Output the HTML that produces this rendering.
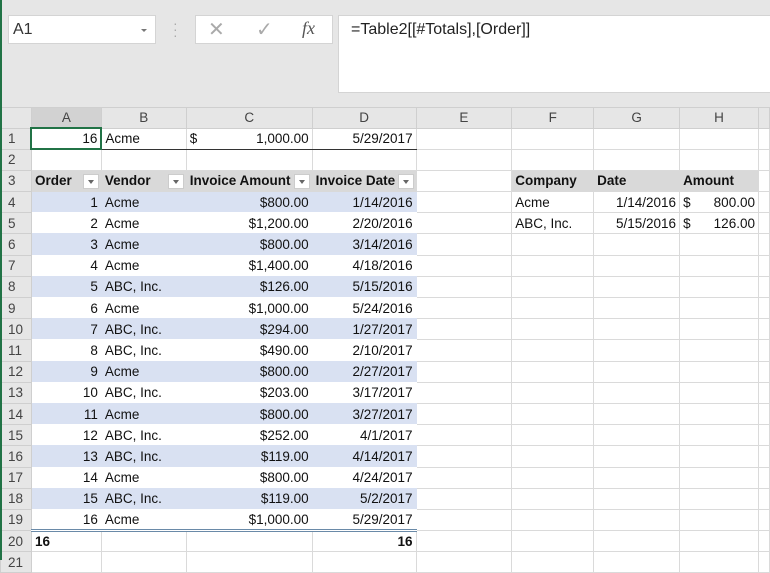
<!DOCTYPE html>
<html><head><style>
*{margin:0;padding:0;box-sizing:border-box}
body{width:770px;height:560px;overflow:hidden;background:#fff;font-family:"Liberation Sans",sans-serif;position:relative}
.top{position:absolute;left:0;top:0;width:770px;height:107px;background:#e6e6e6}
.gl{position:absolute;left:0;top:0;width:2px;height:560px;background:#217346;z-index:5}
.nb{position:absolute;left:8px;top:15px;width:148px;height:29px;background:#fff;border:1px solid #d4d4d4;font-size:16px;padding:5px 4px;color:#333}
.nb:after{content:"";position:absolute;right:8px;top:13px;border:3px solid transparent;border-top:3px solid #777}
.dots{position:absolute;left:173px;top:20px;color:#aaa;font-size:14px;line-height:6px}
.fx{position:absolute;left:195px;top:15px;width:138px;height:29px;background:#fff;border:1px solid #d4d4d4;color:#aaa;font-size:20px}
.fb{position:absolute;left:338px;top:15px;width:440px;height:78px;background:#fff;border:1px solid #d4d4d4;font-size:16px;padding:5px 12px;color:#222}
table{position:absolute;left:0;top:107px;border-collapse:collapse;table-layout:fixed;font-size:13.5px;color:#111}
td{border:1px solid #dadada;height:21.2px;padding:0 3px;white-space:nowrap;overflow:hidden;line-height:19px}
tr.h td{background:#e6e6e6;text-align:center;color:#444;height:20px;border-color:#cfcfcf}
td.r{background:#e6e6e6;color:#444;text-align:left;padding-left:7px;border-color:#cfcfcf}
.R{text-align:right}
.th{background:#d9d9d9;font-weight:bold;position:relative;border-color:#d9d9d9}
.th i{position:absolute;right:2px;top:3px;width:16px;height:15px;background:#fff;border:1px solid #ccc}
.th i:after{content:"";position:absolute;left:4px;top:5px;border:3px solid transparent;border-top:4px solid #666}
tr.b td.c{background:#d9e1f2;border-color:#fff #d9e1f2}
tr.w td.c{border-color:#d9e1f2 #fff}
.g{background:#d9d9d9;font-weight:bold;border-color:#d9d9d9}
</style></head><body>
<div class="gl"></div>
<div class="top">
<div class="nb">A1</div>
<div class="dots">·<br>·<br>·</div>
<div class="fx"><span style="position:absolute;left:12px;top:1px">✕</span><span style="position:absolute;left:60px;top:1px">✓</span><span style="position:absolute;left:106px;top:2px;font-family:'Liberation Serif',serif;font-style:italic;color:#555;font-size:18px">fx</span></div>
<div class="fb">=Table2[[#Totals],[Order]]</div>
</div>
<table>
<colgroup><col style="width:31px"><col style="width:70px"><col style="width:85px"><col style="width:126px"><col style="width:104px"><col style="width:96px"><col style="width:82px"><col style="width:86px"><col style="width:79px"><col style="width:11px"></colgroup>
<tr class="h"><td style="background:#e6e6e6"></td><td style="background:#d2d2d2">A</td><td>B</td><td>C</td><td>D</td><td>E</td><td>F</td><td>G</td><td>H</td><td></td></tr>
<tr><td class="r">1</td><td class="R" style="border:2px solid #217346">16</td><td style="border-bottom:1px solid #333">Acme</td><td style="border-bottom:1px solid #333">$<span style="float:right">1,000.00</span></td><td class="R" style="border-bottom:1px solid #333">5/29/2017</td><td></td><td></td><td></td><td></td><td></td></tr>
<tr><td class="r">2</td><td></td><td></td><td></td><td></td><td></td><td></td><td></td><td></td><td></td></tr>
<tr><td class="r">3</td><td class="th">Order<i></i></td><td class="th">Vendor<i></i></td><td class="th">Invoice Amount<i></i></td><td class="th">Invoice Date<i></i></td><td></td><td class="g">Company</td><td class="g">Date</td><td class="g">Amount</td><td></td></tr>
<tr class="b"><td class="r">4</td><td class="c R">1</td><td class="c">Acme</td><td class="c R">$800.00</td><td class="c R">1/14/2016</td><td></td><td>Acme</td><td class="R">1/14/2016</td><td>$<span style="float:right">800.00</span></td><td></td></tr>
<tr class="w"><td class="r">5</td><td class="c R">2</td><td class="c">Acme</td><td class="c R">$1,200.00</td><td class="c R">2/20/2016</td><td></td><td>ABC, Inc.</td><td class="R">5/15/2016</td><td>$<span style="float:right">126.00</span></td><td></td></tr>
<tr class="b"><td class="r">6</td><td class="c R">3</td><td class="c">Acme</td><td class="c R">$800.00</td><td class="c R">3/14/2016</td><td></td><td></td><td></td><td></td><td></td></tr>
<tr class="w"><td class="r">7</td><td class="c R">4</td><td class="c">Acme</td><td class="c R">$1,400.00</td><td class="c R">4/18/2016</td><td></td><td></td><td></td><td></td><td></td></tr>
<tr class="b"><td class="r">8</td><td class="c R">5</td><td class="c">ABC, Inc.</td><td class="c R">$126.00</td><td class="c R">5/15/2016</td><td></td><td></td><td></td><td></td><td></td></tr>
<tr class="w"><td class="r">9</td><td class="c R">6</td><td class="c">Acme</td><td class="c R">$1,000.00</td><td class="c R">5/24/2016</td><td></td><td></td><td></td><td></td><td></td></tr>
<tr class="b"><td class="r">10</td><td class="c R">7</td><td class="c">ABC, Inc.</td><td class="c R">$294.00</td><td class="c R">1/27/2017</td><td></td><td></td><td></td><td></td><td></td></tr>
<tr class="w"><td class="r">11</td><td class="c R">8</td><td class="c">ABC, Inc.</td><td class="c R">$490.00</td><td class="c R">2/10/2017</td><td></td><td></td><td></td><td></td><td></td></tr>
<tr class="b"><td class="r">12</td><td class="c R">9</td><td class="c">Acme</td><td class="c R">$800.00</td><td class="c R">2/27/2017</td><td></td><td></td><td></td><td></td><td></td></tr>
<tr class="w"><td class="r">13</td><td class="c R">10</td><td class="c">ABC, Inc.</td><td class="c R">$203.00</td><td class="c R">3/17/2017</td><td></td><td></td><td></td><td></td><td></td></tr>
<tr class="b"><td class="r">14</td><td class="c R">11</td><td class="c">Acme</td><td class="c R">$800.00</td><td class="c R">3/27/2017</td><td></td><td></td><td></td><td></td><td></td></tr>
<tr class="w"><td class="r">15</td><td class="c R">12</td><td class="c">ABC, Inc.</td><td class="c R">$252.00</td><td class="c R">4/1/2017</td><td></td><td></td><td></td><td></td><td></td></tr>
<tr class="b"><td class="r">16</td><td class="c R">13</td><td class="c">ABC, Inc.</td><td class="c R">$119.00</td><td class="c R">4/14/2017</td><td></td><td></td><td></td><td></td><td></td></tr>
<tr class="w"><td class="r">17</td><td class="c R">14</td><td class="c">Acme</td><td class="c R">$800.00</td><td class="c R">4/24/2017</td><td></td><td></td><td></td><td></td><td></td></tr>
<tr class="b"><td class="r">18</td><td class="c R">15</td><td class="c">ABC, Inc.</td><td class="c R">$119.00</td><td class="c R">5/2/2017</td><td></td><td></td><td></td><td></td><td></td></tr>
<tr class="w"><td class="r">19</td><td class="c R" style="border-bottom:3px double #6a8aa8">16</td><td class="c" style="border-bottom:3px double #6a8aa8">Acme</td><td class="c R" style="border-bottom:3px double #6a8aa8">$1,000.00</td><td class="c R" style="border-bottom:3px double #6a8aa8">5/29/2017</td><td></td><td></td><td></td><td></td><td></td></tr>
<tr><td class="r">20</td><td style="font-weight:bold">16</td><td></td><td></td><td class="R" style="font-weight:bold">16</td><td></td><td></td><td></td><td></td><td></td></tr>
<tr><td class="r">21</td><td></td><td></td><td></td><td></td><td></td><td></td><td></td><td></td><td></td></tr>
</table>
</body></html>
